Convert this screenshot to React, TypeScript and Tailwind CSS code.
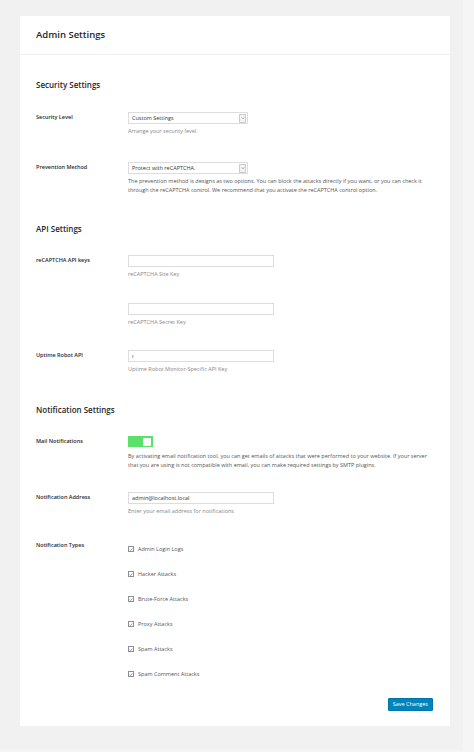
import React from 'react'

const font = { fontFamily: '"Open Sans", "Noto Sans", sans-serif' }

const Label = ({ children }: { children: React.ReactNode }) => (
  <div className="w-[92px] shrink-0 pt-[1px] text-[5.5px] font-semibold text-[#23282d]">{children}</div>
)

const Hint = ({ children }: { children: React.ReactNode }) => (
  <div className="mt-[3px] text-[5.5px] leading-[9px] text-[#888]">{children}</div>
)

const Select = ({ value }: { value: string }) => (
  <div className="flex h-[12px] w-[120px] items-center justify-between border border-[#ddd] bg-white pl-[3px] pr-[1px] text-[5.5px] text-[#32373c]">
    <span>{value}</span>
    <span className="flex h-[9px] w-[7px] items-center justify-center border border-[#ccc] bg-[#f3f3f3]">
      <svg viewBox="0 0 8 8" className="h-[4px] w-[4px]">
        <path d="M1.5 3l2.5 2.5L6.5 3" fill="none" stroke="#666" strokeWidth="1.2" />
      </svg>
    </span>
  </div>
)

const Input = ({ value }: { value?: string }) => (
  <div className="flex h-[12px] w-[146px] items-center border border-[#ddd] bg-white pl-[3px] text-[5.5px] text-[#32373c]">
    {value}
  </div>
)

const Section = ({ title, className }: { title: string; className: string }) => (
  <h2 className={`text-[8px] font-semibold text-[#23282d] ${className}`}>{title}</h2>
)

const Check = ({ label }: { label: string }) => (
  <div className="flex h-[25px] items-start gap-[4px] pt-[3px]">
    <span className="mt-[1px] flex h-[6px] w-[6px] items-center justify-center border border-[#8c8f94] bg-white">
      <svg viewBox="0 0 8 8" className="h-[5px] w-[5px]">
        <path d="M1.5 4.2l1.8 1.8L6.6 2" fill="none" stroke="#555" strokeWidth="1.1" />
      </svg>
    </span>
    <span className="text-[5.5px] leading-[8px] text-[#555]">{label}</span>
  </div>
)

export default function App() {
  const types = [
    'Admin Login Logs',
    'Hacker Attacks',
    'Brute-Force Attacks',
    'Proxy Attacks',
    'Spam Attacks',
    'Spam Comment Attacks',
  ]

  return (
    <div className="h-[752px] w-[474px] bg-[#f5f5f5]" style={font}>
      <div className="h-[750px] w-[463px] bg-[#f1f1f1] pt-[16px]">
        <div className="ml-[20px] w-[430px] bg-white pb-[15px]">
          <div className="border-b border-[#f0f0f0] px-[16px] pb-[12px] pt-[12px]">
            <h1 className="text-[9.5px] font-semibold leading-[14px] text-[#23282d]">Admin Settings</h1>
          </div>

          <div className="px-[16px]">
            <Section title="Security Settings" className="mt-[24px] leading-[12px]" />

            <div className="mt-[21px] flex">
              <Label>Security Level</Label>
              <div>
                <Select value="Custom Settings" />
                <Hint>Arrange your security level.</Hint>
              </div>
            </div>

            <div className="mt-[26px] flex">
              <Label>Prevention Method</Label>
              <div>
                <Select value="Protect with reCAPTCHA." />
                <p className="mt-[3px] w-[310px] text-[5.5px] leading-[9px] text-[#555]">
                  The prevention method is designs as two options. You can block the attacks directly if you want, or you can check it
                  through the reCAPTCHA control. We recommend that you activate the reCAPTCHA control option.
                </p>
              </div>
            </div>

            <Section title="API Settings" className="mt-[28px] leading-[12px]" />

            <div className="mt-[20px] flex">
              <Label>reCAPTCHA API keys</Label>
              <div>
                <Input />
                <Hint>reCAPTCHA Site Key</Hint>
                <div className="mt-[24px]">
                  <Input />
                  <Hint>reCAPTCHA Secret Key</Hint>
                </div>
              </div>
            </div>

            <div className="mt-[23px] flex">
              <Label>Uptime Robot API</Label>
              <div>
                <Input value="ı" />
                <Hint>Uptime Robot Monitor-Specific API Key</Hint>
              </div>
            </div>

            <Section title="Notification Settings" className="mt-[30px] leading-[12px]" />

            <div className="mt-[20px] flex">
              <Label>Mail Notifications</Label>
              <div>
                <div className="flex h-[11px] w-[25px] items-center justify-end bg-[#5ce06a] pr-[2px]">
                  <span className="h-[8px] w-[8px] rounded-[1px] bg-white" />
                </div>
                <p className="mt-[5px] w-[310px] text-[5.5px] leading-[9px] text-[#555]">
                  By activating email notification tool, you can get emails of attacks that were performed to your website. If your server
                  that you are using is not compatible with email, you can make required settings by SMTP plugins.
                </p>
              </div>
            </div>

            <div className="mt-[22px] flex">
              <Label>Notification Address</Label>
              <div>
                <Input value="admin@localhost.local" />
                <Hint>Enter your email address for notifications</Hint>
              </div>
            </div>

            <div className="mt-[24px] flex">
              <Label>Notification Types</Label>
              <div className="mt-[2px]">
                {types.map((t) => (
                  <Check key={t} label={t} />
                ))}
              </div>
            </div>

            <div className="mt-[6px] flex justify-end pr-[1px]">
              <button className="h-[13px] rounded-[1px] border border-[#0073aa] bg-[#0085ba] px-[4px] text-[5.5px] leading-[11px] text-white">
                Save Changes
              </button>
            </div>
          </div>
        </div>
      </div>
    </div>
  )
}
